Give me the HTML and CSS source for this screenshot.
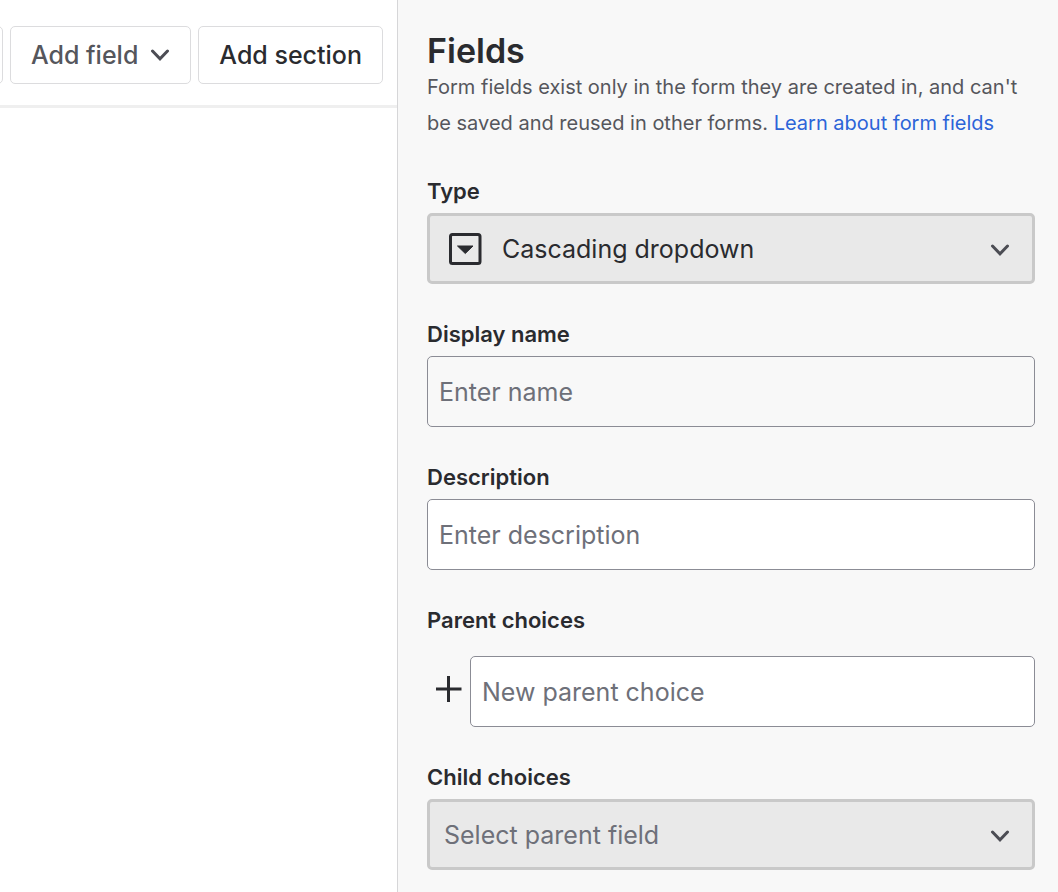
FILE: index.html
```html
<!DOCTYPE html>
<html lang="en">
<head>
  <meta charset="UTF-8">
  <title>Form editor</title>
  <link rel="stylesheet" href="styles.css">
</head>
<body>

  <div class="editor">
    <main class="canvas">
      <div class="toolbar">
        <button type="button" class="btn" aria-label="Preview"></button>
        <button type="button" class="btn btn-muted">
          Add field
          <svg class="chevron" viewBox="0 0 20 12" aria-hidden="true"><path d="M2.5 2l7.5 7.8L17.500 2"/></svg>
        </button>
        <button type="button" class="btn">Add section</button>
      </div>
    </main>

    <aside class="panel">
      <h2>Fields</h2>
      <p class="intro">Form fields exist only in the form they are created in, and can't be saved and reused in other forms. <a href="#">Learn about form fields</a></p>

      <div class="form-group">
        <label for="type">Type</label>
        <div class="select-wrap with-icon">
          <svg class="type-icon" viewBox="0 0 34 34" aria-hidden="true">
            <rect x="2.500" y="2.500" width="29.500" height="29" rx="2"/>
            <path d="M9.500 14h15.500L17.250 21.500z"/>
          </svg>
          <select id="type">
            <option>Cascading dropdown</option>
          </select>
          <svg class="chevron" viewBox="0 0 20 12" aria-hidden="true"><path d="M2.5 2l7.5 7.8L17.500 2"/></svg>
        </div>
      </div>

      <div class="form-group">
        <label for="display-name">Display name</label>
        <input type="text" id="display-name" class="plain" placeholder="Enter name">
      </div>

      <div class="form-group">
        <label for="description">Description</label>
        <input type="text" id="description" placeholder="Enter description">
      </div>

      <div class="form-group choices">
        <label for="parent-choice">Parent choices</label>
        <div class="choice-row">
          <button type="button" class="add-choice" aria-label="Add choice">
            <svg viewBox="0 0 28 28" aria-hidden="true"><path d="M13.500 1v26M1 14h25.500"/></svg>
          </button>
          <input type="text" id="parent-choice" placeholder="New parent choice">
        </div>
      </div>

      <div class="form-group">
        <label for="child-choices">Child choices</label>
        <div class="select-wrap">
          <select id="child-choices" class="empty">
            <option>Select parent field</option>
          </select>
          <svg class="chevron" viewBox="0 0 20 12" aria-hidden="true"><path d="M2.5 2l7.5 7.8L17.500 2"/></svg>
        </div>
      </div>
    </aside>
  </div>

</body>
</html>
```

FILE: styles.css
```css
* {
  box-sizing: border-box;
}

body {
  margin: 0;
  font-family: Inter, "Liberation Sans", sans-serif;
  color: #2a2b2f;
  background-color: #fff;
}

button, input, select {
  font-family: inherit;
  font-size: 25px;
  color: inherit;
}

.editor {
  display: grid;
  grid-template-columns: 397fr 661fr;
  min-height: 100vh;
}

.canvas {
  min-width: 0;
}

.toolbar {
  display: flex;
  justify-content: flex-end;
  gap: 7px;
  padding: 26px 14px 21px 0;
  border-bottom: 3px solid #efefef;
  overflow: hidden;
}

.btn {
  display: flex;
  flex-shrink: 0;
  align-items: center;
  gap: 12px;
  height: 58px;
  padding: 0 20px;
  font-weight: 500;
  background-color: #fff;
  border: 1px solid #dcdcde;
  border-radius: 5px;
}

.btn-muted {
  color: #55565c;
}

.chevron {
  width: 20px;
  height: 12px;
  fill: none;
  stroke: #4c4d54;
  stroke-width: 3;
  stroke-linecap: round;
}

.panel {
  padding: 33px 23px 20px 29px;
  background-color: #f8f8f8;
  border-left: 1px solid #d6d6d8;
}

h2 {
  margin: 0;
  font-size: 34px;
  line-height: 36px;
  font-weight: 600;
}

.intro {
  margin: 0 0 36px;
  font-size: 20px;
  line-height: 36px;
  color: #55565c;
}

.intro a {
  color: #2c64d8;
  text-decoration: none;
}

.form-group {
  margin-bottom: 36px;
}

label {
  display: block;
  margin-bottom: 8px;
  font-size: 22px;
  line-height: 28px;
  font-weight: 600;
}

input, select {
  display: block;
  width: 100%;
  height: 71px;
  border-radius: 5px;
}

input {
  min-width: 0;
  padding: 0 11px;
  background-color: #fff;
  border: 1px solid #8b8c95;
}

input.plain {
  background-color: #f8f8f8;
}

input::placeholder {
  color: #6e7079;
  opacity: 1;
}

.select-wrap {
  position: relative;
}

select {
  appearance: none;
  padding: 0 60px 0 14px;
  background-color: #e9e9e9;
  border: 3px solid #c9c9c9;
}

select.empty {
  color: #6e7079;
}

.with-icon select {
  padding-left: 72px;
}

.select-wrap .chevron {
  position: absolute;
  top: 31px;
  right: 25px;
  pointer-events: none;
}

.type-icon {
  position: absolute;
  top: 19px;
  left: 21px;
  width: 34px;
  height: 34px;
  pointer-events: none;
}

.type-icon rect {
  fill: none;
  stroke: #2a2b2f;
  stroke-width: 3;
}

.type-icon path {
  fill: #2a2b2f;
  stroke: #2a2b2f;
  stroke-linejoin: round;
}

.choices label {
  margin-bottom: 22px;
}

.choice-row {
  display: flex;
  align-items: center;
}

.add-choice {
  flex-shrink: 0;
  width: 43px;
  height: 43px;
  padding: 4px 7px 10px 8px;
  background: none;
  border: 0;
}

.add-choice svg {
  display: block;
  width: 28px;
  height: 28px;
  fill: none;
  stroke: #2a2b2f;
  stroke-width: 3;
}
```
